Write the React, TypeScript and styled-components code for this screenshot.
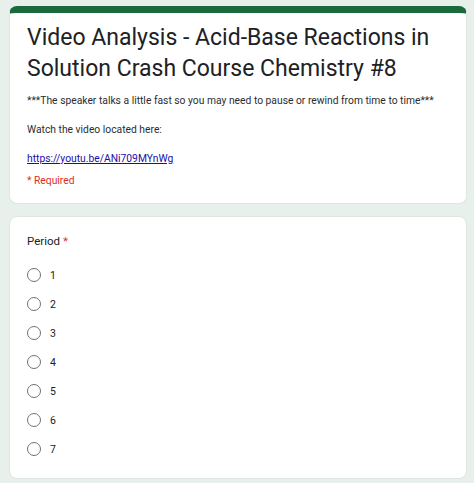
import React from "react";
import styled, { createGlobalStyle } from "styled-components";

const Global = createGlobalStyle`
  html, body {
    margin: 0;
    padding: 0;
    background: #e7f0eb;
  }
  body {
    font-family: Roboto, "Liberation Sans", sans-serif;
  }
`;

const Page = styled.div`
  width: 474px;
  height: 483px;
  box-sizing: border-box;
  padding: 6px 7px 0 9px;
  display: flex;
  flex-direction: column;
  gap: 12px;
  overflow: hidden;
`;

const Card = styled.div<{ $top?: boolean }>`
  background: #fff;
  border-radius: 8px;
  box-sizing: border-box;
  border: 1px solid #dde6e1;
  border-top: ${(p) => (p.$top ? "7px solid #1b6a3b" : "1px solid #dde6e1")};
  padding: ${(p) => (p.$top ? "9px 17px 14px 17px" : "15px 17px 19px 17px")};
  display: flex;
  flex-direction: column;
`;

const Title = styled.h1`
  margin: 0;
  font-family: Roboto, "Liberation Sans", sans-serif;
  font-weight: 400;
  font-size: 23px;
  line-height: 31px;
  color: #202124;
`;

const Para = styled.p<{ $mt: number }>`
  margin: ${(p) => p.$mt}px 0 0 0;
  font-size: 10.3px;
  line-height: 16px;
  color: #2b2c2f;
`;

const Link = styled.a`
  color: #1a0dab;
  text-decoration: underline;
`;

const Required = styled.div`
  margin-top: 6px;
  font-size: 10.3px;
  line-height: 16px;
  color: #d93025;
`;

const Question = styled.div`
  font-size: 11.5px;
  line-height: 18px;
  color: #202124;
  margin-bottom: 15px;
  span {
    color: #d93025;
  }
`;

const Options = styled.div`
  display: flex;
  flex-direction: column;
  gap: 9px;
`;

const Option = styled.label`
  display: flex;
  align-items: center;
  gap: 9px;
  height: 20px;
  font-size: 10.5px;
  color: #202124;
`;

const Radio = styled.span`
  width: 14px;
  height: 14px;
  box-sizing: border-box;
  border: 1.4px solid #6f7377;
  border-radius: 50%;
  flex-shrink: 0;
`;

export default function App() {
  const periods = ["1", "2", "3", "4", "5", "6", "7"];
  return (
    <>
      <Global />
      <Page>
        <Card $top>
          <Title>
            Video Analysis - Acid-Base Reactions in Solution Crash Course
            Chemistry #8
          </Title>
          <Para $mt={9}>
            ***The speaker talks a little fast so you may need to pause or
            rewind from time to time***
          </Para>
          <Para $mt={13}>Watch the video located here:</Para>
          <Para $mt={13}>
            <Link href="#">https://youtu.be/ANi709MYnWg</Link>
          </Para>
          <Required>* Required</Required>
        </Card>
        <Card>
          <Question>
            Period <span>*</span>
          </Question>
          <Options>
            {periods.map((p) => (
              <Option key={p}>
                <Radio />
                {p}
              </Option>
            ))}
          </Options>
        </Card>
      </Page>
    </>
  );
}
